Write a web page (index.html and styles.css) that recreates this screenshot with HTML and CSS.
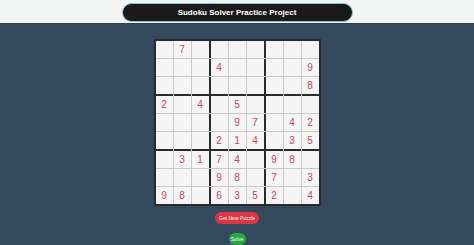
FILE: index.html
```html
<!DOCTYPE html>
<html>
<head>
<meta charset="utf-8">
<link rel="stylesheet" href="styles.css">
</head>
<body>
<header class="top">
  <h1 class="title">Sudoku Solver Practice Project</h1>
</header>
<main class="main">
  <div class="board">
    <div class="c"></div><div class="c">7</div><div class="c r"></div><div class="c"></div><div class="c"></div><div class="c r"></div><div class="c"></div><div class="c"></div><div class="c"></div>
    <div class="c"></div><div class="c"></div><div class="c r"></div><div class="c">4</div><div class="c"></div><div class="c r"></div><div class="c"></div><div class="c"></div><div class="c">9</div>
    <div class="c b"></div><div class="c b"></div><div class="c r b"></div><div class="c b"></div><div class="c b"></div><div class="c r b"></div><div class="c b"></div><div class="c b"></div><div class="c b">8</div>
    <div class="c">2</div><div class="c"></div><div class="c r">4</div><div class="c"></div><div class="c">5</div><div class="c r"></div><div class="c"></div><div class="c"></div><div class="c"></div>
    <div class="c"></div><div class="c"></div><div class="c r"></div><div class="c"></div><div class="c">9</div><div class="c r">7</div><div class="c"></div><div class="c">4</div><div class="c">2</div>
    <div class="c b"></div><div class="c b"></div><div class="c r b"></div><div class="c b">2</div><div class="c b">1</div><div class="c r b">4</div><div class="c b"></div><div class="c b">3</div><div class="c b">5</div>
    <div class="c"></div><div class="c">3</div><div class="c r">1</div><div class="c">7</div><div class="c">4</div><div class="c r"></div><div class="c">9</div><div class="c">8</div><div class="c"></div>
    <div class="c"></div><div class="c"></div><div class="c r"></div><div class="c">9</div><div class="c">8</div><div class="c r"></div><div class="c">7</div><div class="c"></div><div class="c">3</div>
    <div class="c">9</div><div class="c">8</div><div class="c r"></div><div class="c">6</div><div class="c">3</div><div class="c r">5</div><div class="c">2</div><div class="c"></div><div class="c">4</div>
  </div>
  <button class="btn btn-new">Get New Puzzle</button>
  <button class="btn btn-solve">Solve</button>
</main>
</body>
</html>
```
FILE: styles.css
```css
html, body {
  margin: 0;
  padding: 0;
}
body {
  background: #34495e;
  font-family: "Liberation Sans", Arial, sans-serif;
  height: 245px;
  overflow: hidden;
}
.top {
  background: #f3f4f4;
  height: 24px;
  display: flex;
  justify-content: center;
  align-items: flex-start;
  padding-top: 3px;
  box-sizing: border-box;
  border-bottom: 1px solid #2c3e50;
}
.title {
  margin: 0;
  width: 231px;
  height: 19px;
  box-sizing: border-box;
  background: #1a1a1a;
  border: 1px solid #7fc6dc;
  border-radius: 10px;
  color: #fff;
  font-size: 8px;
  font-weight: bold;
  display: flex;
  align-items: center;
  justify-content: center;
}
.main {
  display: flex;
  flex-direction: column;
  align-items: center;
  padding-top: 15px;
}
.board {
  display: grid;
  grid-template-columns: repeat(9, auto);
  gap: 1px;
  background: #c8c8c8;
  border: 2px solid #2b2b2b;
  width: max-content;
}
.c {
  width: 17px;
  height: 17px;
  background: #f5f5f5;
  color: #cc4455;
  font-size: 10px;
  line-height: 17px;
  text-align: center;
}
.c.r {
  border-right: 1px solid #2b2b2b;
  box-shadow: 1px 0 0 #2b2b2b;
}
.c.b {
  border-bottom: 1px solid #2b2b2b;
  box-shadow: 0 1px 0 #2b2b2b;
}
.c.r.b {
  box-shadow: 1px 0 0 #2b2b2b, 0 1px 0 #2b2b2b, 1px 1px 0 #2b2b2b;
}
.btn {
  border: none;
  color: #fff;
  font-family: "Liberation Sans", Arial, sans-serif;
  font-size: 5px;
  border-radius: 6px;
  padding: 0;
  display: flex;
  align-items: center;
  justify-content: center;
}
.btn-new {
  margin-top: 6px;
  width: 44px;
  height: 12px;
  background: #dc3545;
}
.btn-solve {
  margin-top: 9px;
  width: 17px;
  height: 12px;
  background: #28a745;
}
```
